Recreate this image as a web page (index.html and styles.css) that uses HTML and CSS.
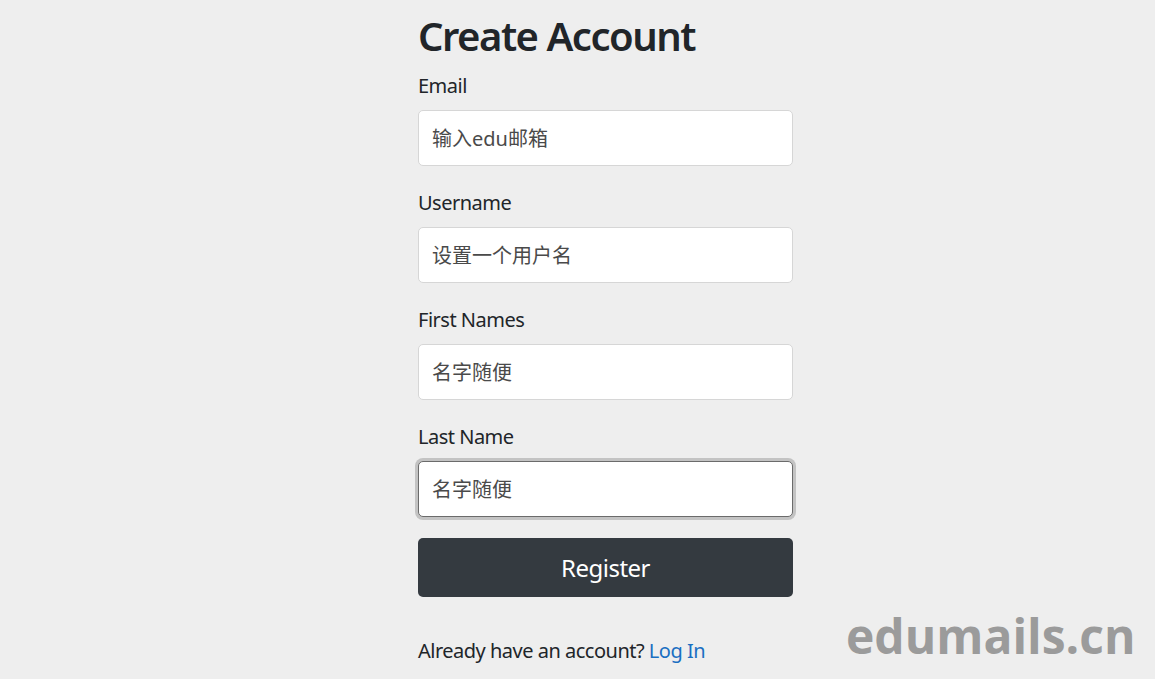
FILE: index.html
```html
<!DOCTYPE html>
<html lang="zh-CN">
<head>
<meta charset="utf-8">
<title>Create Account</title>
<link rel="stylesheet" href="styles.css">
</head>
<body>
<main class="page">
  <form class="form">
    <h1 class="title">Create Account</h1>
    <div class="group">
      <label class="label" for="email">Email</label>
      <input class="control" id="email" type="text" placeholder="输入edu邮箱">
    </div>
    <div class="group">
      <label class="label" for="username">Username</label>
      <input class="control" id="username" type="text" placeholder="设置一个用户名">
    </div>
    <div class="group">
      <label class="label" for="first">First Names</label>
      <input class="control" id="first" type="text" placeholder="名字随便">
    </div>
    <div class="group">
      <label class="label" for="last">Last Name</label>
      <input class="control focused" id="last" type="text" placeholder="名字随便">
    </div>
    <button class="btn" type="button">Register</button>
    <p class="footer">Already have an account? <a class="link" href="#">Log In</a></p>
  </form>
</main>
<div class="watermark">edumails.cn</div>
</body>
</html>
```
FILE: styles.css
```css
html, body {
  margin: 0;
  padding: 0;
  background: #eeeeee;
  height: 100%;
  overflow: hidden;
}
body {
  font-family: "Noto Sans", "Noto Sans CJK SC", sans-serif;
  color: #212529;
}
.page {
  padding-left: 418px;
  padding-top: 12px;
}
.form {
  width: 375px;
  display: flex;
  flex-direction: column;
}
.title {
  margin: 0 0 10px;
  font-size: 40px;
  line-height: 48px;
  font-weight: 600;
  letter-spacing: -1.5px;
  color: #212529;
}
.group {
  display: flex;
  flex-direction: column;
  margin-bottom: 21px;
}
.label {
  font-size: 20px;
  line-height: 30px;
  margin: 1px 0 9px;
  letter-spacing: -0.5px;
}
.control {
  box-sizing: border-box;
  height: 56px;
  width: 100%;
  border: 1px solid #d6d6d6;
  border-radius: 5px;
  background: #fff;
  padding: 0 13px;
  font-family: "Noto Sans", "Noto Sans CJK SC", sans-serif;
  font-size: 20px;
  color: #495057;
  outline: none;
}
.control::placeholder {
  color: #4a4a4a;
  opacity: 1;
}
.control.focused {
  border-color: #6b6b6b;
  box-shadow: 0 0 0 3px #c3c3c3;
}
.btn {
  box-sizing: border-box;
  height: 59px;
  width: 100%;
  border: none;
  border-radius: 5px;
  background: #343a40;
  color: #fff;
  font-family: "Noto Sans", sans-serif;
  font-size: 24px;
  letter-spacing: -0.5px;
  cursor: pointer;
}
.footer {
  margin: 39px 0 0;
  font-size: 20px;
  line-height: 30px;
  letter-spacing: -0.5px;
}
.link {
  color: #1a6fc2;
  text-decoration: none;
}
.watermark {
  position: absolute;
  left: 846px;
  top: 601px;
  font-family: "Open Sans", sans-serif;
  font-weight: 700;
  font-size: 48px;
  line-height: 70px;
  color: #9b9b9b;
}
```
